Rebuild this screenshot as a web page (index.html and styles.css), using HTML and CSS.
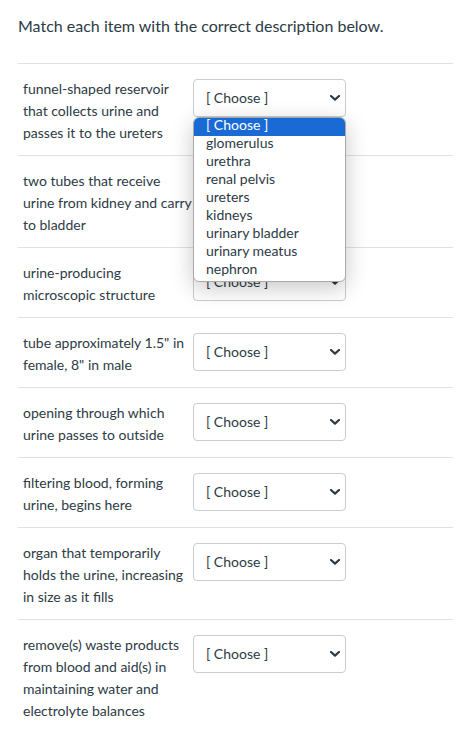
FILE: index.html
```html
<!DOCTYPE html>
<html lang="en">
<head>
<meta charset="utf-8">
<title>Matching</title>
<link rel="stylesheet" href="styles.css">
</head>
<body>
<div class="quiz">
  <p class="prompt">Match each item with the correct description below.</p>
  <div class="rows">
    <div class="row">
      <div class="desc">funnel-shaped reservoir that collects urine and passes it to the ureters</div>
      <div class="select open">
        <span class="val">[ Choose ]</span>
        <svg class="chev" width="10" height="6" viewBox="0 0 10 6"><path d="M1 1 L5 4.6 L9 1" fill="none" stroke="#2d3b45" stroke-width="2.2" stroke-linecap="round" stroke-linejoin="round"/></svg>
        <ul class="menu">
          <li class="sel">[ Choose ]</li>
          <li>glomerulus</li>
          <li>urethra</li>
          <li>renal pelvis</li>
          <li>ureters</li>
          <li>kidneys</li>
          <li>urinary bladder</li>
          <li>urinary meatus</li>
          <li>nephron</li>
        </ul>
      </div>
    </div>
    <div class="row">
      <div class="desc">two tubes that receive urine from kidney and carry to bladder</div>
      <div class="select">
        <span class="val">[ Choose ]</span>
        <svg class="chev" width="10" height="6" viewBox="0 0 10 6"><path d="M1 1 L5 4.6 L9 1" fill="none" stroke="#2d3b45" stroke-width="2.2" stroke-linecap="round" stroke-linejoin="round"/></svg>
      </div>
    </div>
    <div class="row">
      <div class="desc">urine-producing microscopic structure</div>
      <div class="select">
        <span class="val">[ Choose ]</span>
        <svg class="chev" width="10" height="6" viewBox="0 0 10 6"><path d="M1 1 L5 4.6 L9 1" fill="none" stroke="#2d3b45" stroke-width="2.2" stroke-linecap="round" stroke-linejoin="round"/></svg>
      </div>
    </div>
    <div class="row">
      <div class="desc">tube approximately 1.5" in female, 8" in male</div>
      <div class="select">
        <span class="val">[ Choose ]</span>
        <svg class="chev" width="10" height="6" viewBox="0 0 10 6"><path d="M1 1 L5 4.6 L9 1" fill="none" stroke="#2d3b45" stroke-width="2.2" stroke-linecap="round" stroke-linejoin="round"/></svg>
      </div>
    </div>
    <div class="row">
      <div class="desc">opening through which urine passes to outside</div>
      <div class="select">
        <span class="val">[ Choose ]</span>
        <svg class="chev" width="10" height="6" viewBox="0 0 10 6"><path d="M1 1 L5 4.6 L9 1" fill="none" stroke="#2d3b45" stroke-width="2.2" stroke-linecap="round" stroke-linejoin="round"/></svg>
      </div>
    </div>
    <div class="row">
      <div class="desc">filtering blood, forming urine, begins here</div>
      <div class="select">
        <span class="val">[ Choose ]</span>
        <svg class="chev" width="10" height="6" viewBox="0 0 10 6"><path d="M1 1 L5 4.6 L9 1" fill="none" stroke="#2d3b45" stroke-width="2.2" stroke-linecap="round" stroke-linejoin="round"/></svg>
      </div>
    </div>
    <div class="row">
      <div class="desc">organ that temporarily holds the urine, increasing in size as it fills</div>
      <div class="select">
        <span class="val">[ Choose ]</span>
        <svg class="chev" width="10" height="6" viewBox="0 0 10 6"><path d="M1 1 L5 4.6 L9 1" fill="none" stroke="#2d3b45" stroke-width="2.2" stroke-linecap="round" stroke-linejoin="round"/></svg>
      </div>
    </div>
    <div class="row last">
      <div class="desc">remove(s) waste products from blood and aid(s) in maintaining water and electrolyte balances</div>
      <div class="select">
        <span class="val">[ Choose ]</span>
        <svg class="chev" width="10" height="6" viewBox="0 0 10 6"><path d="M1 1 L5 4.6 L9 1" fill="none" stroke="#2d3b45" stroke-width="2.2" stroke-linecap="round" stroke-linejoin="round"/></svg>
      </div>
    </div>
  </div>
</div>
</body>
</html>
```
FILE: styles.css
```css
* { box-sizing: border-box; }
html, body { margin: 0; padding: 0; background: #fff; }
body {
  font-family: Lato, "Open Sans", sans-serif;
  color: #2d3b45;
}
.quiz {
  padding: 14px 15px 0 18px;
}
.prompt {
  margin: 0 0 25px 0;
  font-size: 16px;
  line-height: 24px;
}
.row {
  display: flex;
  align-items: flex-start;
  border-top: 1px solid #dfe1e3;
  padding: 14px 0 11px 5px;
}
.row.last { padding-bottom: 20px; }
.desc {
  flex: none;
  width: 170px;
  font-size: 14px;
  line-height: 22px;
}
.select {
  position: relative;
  flex: none;
  width: 153px;
  height: 38px;
  margin-top: 1px;
  border: 1px solid #c7cdd1;
  border-radius: 4px;
  background: #fff;
  display: flex;
  align-items: center;
  justify-content: space-between;
  padding: 0 5px 0 12px;
  font-size: 14px;
}
.val { line-height: 20px; margin-top: -1px; }
.chev { display: block; }
.select.open { z-index: 5; }
.menu {
  position: absolute;
  left: -1px;
  top: 37px;
  width: 153px;
  margin: 0;
  padding: 0 0 1px 0;
  list-style: none;
  background: #fff;
  border: 1px solid #a9a9a9;
  border-radius: 6px;
  box-shadow: 0 6px 22px rgba(0, 0, 0, 0.22);
  overflow: hidden;
}
.menu li {
  height: 18px;
  line-height: 14px;
  padding-left: 12px;
  font-size: 14px;
  color: #2d3b45;
}
.menu li.sel {
  background: #1a6ad6;
  color: #fff;
}
```
